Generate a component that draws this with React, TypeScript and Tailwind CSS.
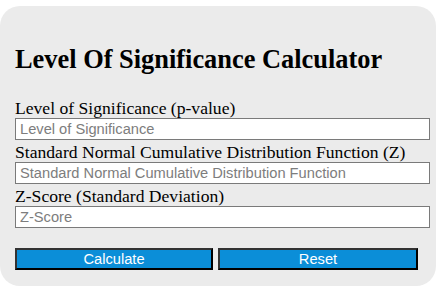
import React from "react";

const serif = { fontFamily: '"Liberation Serif", "Times New Roman", serif' };

function Field({ label, placeholder }: { label: string; placeholder: string }) {
  return (
    <div>
      <label className="block text-[17.6px] leading-[20px] text-black">{label}</label>
      <input
        className="block w-full h-[22px] border border-[#7a7a7a] bg-white px-[4px] text-[14.67px] font-['Liberation_Sans',Arial,sans-serif] placeholder:text-[#7d7d7d] outline-none"
        placeholder={placeholder}
      />
    </div>
  );
}

export default function App() {
  return (
    <div className="w-[436px] h-[288px] bg-white pt-[6px] overflow-hidden" style={serif}>
      <div className="bg-[#ebebeb] rounded-[20px] h-[280px] pl-[15px] pr-[6px] pt-[38px]">
        <h2 className="text-[26.4px] leading-[30px] font-bold text-black mb-[24px]">
          Level Of Significance Calculator
        </h2>
        <div className="flex flex-col gap-[2px]">
          <Field label="Level of Significance (p-value)" placeholder="Level of Significance" />
          <Field
            label="Standard Normal Cumulative Distribution Function (Z)"
            placeholder="Standard Normal Cumulative Distribution Function"
          />
          <Field label="Z-Score (Standard Deviation)" placeholder="Z-Score" />
        </div>
        <div className="flex gap-[5px] mt-[20px] font-['Liberation_Sans',Arial,sans-serif]">
          <button className="w-[198px] h-[22px] bg-[#0b8ed8] border-2 border-[#333] border-r-black border-b-black text-white text-[14.67px] leading-none">
            Calculate
          </button>
          <button className="w-[200px] h-[22px] bg-[#0b8ed8] border-2 border-[#333] border-r-black border-b-black text-white text-[14.67px] leading-none">
            Reset
          </button>
        </div>
      </div>
    </div>
  );
}
